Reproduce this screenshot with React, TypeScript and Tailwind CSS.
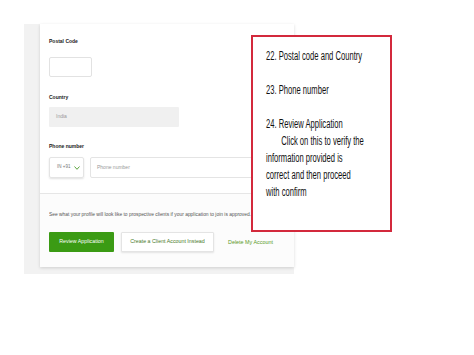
export default function App() {
  const ui = { fontFamily: '"Liberation Sans", Arial, sans-serif' };

  return (
    <div className="relative w-[474px] h-[355px] bg-white overflow-hidden" style={ui}>
      <div className="mt-[24px] ml-[24px] w-[270px] bg-[#f2f2f2] pl-[16px] pb-[7px]">
        <div className="bg-white shadow-[0_1px_3px_rgba(0,0,0,0.15)]">
          <div className="pl-[9px] pr-[9px] pt-[14px] pb-[15px] border-b border-[#e6e6e6]">
            <div className="text-[5px] font-bold text-[#222] leading-[7px]">Postal Code</div>
            <div className="mt-[12px] w-[43px] h-[20px] border border-[#e2e2e2] rounded-[2px]" />

            <div className="mt-[17px] text-[5px] font-bold text-[#222] leading-[7px]">Country</div>
            <div className="mt-[6px] w-[130px] h-[20px] bg-[#f0f0f0] rounded-[1px] flex items-center pl-[7px]">
              <span className="text-[5px] text-[#999]">India</span>
            </div>

            <div className="mt-[16px] text-[5px] font-bold text-[#222] leading-[7px]">Phone number</div>
            <div className="mt-[7px] flex gap-[6px]">
              <div className="w-[35px] h-[21px] border border-[#e4e4e4] shadow-[0_1px_2px_rgba(0,0,0,0.12)] rounded-[2px] flex items-center pl-[7px] pr-[3px]">
                <span className="text-[4.5px] text-[#777] whitespace-nowrap">IN +91</span>
                <svg className="ml-auto" width="6" height="4" viewBox="0 0 6 4">
                  <polyline points="0.5,0.5 3,3.3 5.5,0.5" fill="none" stroke="#4a9a2a" strokeWidth="0.9" />
                </svg>
              </div>
              <div className="flex-1 h-[21px] border border-[#e4e4e4] rounded-[2px] flex items-center pl-[6px]">
                <span className="text-[5px] text-[#999]">Phone number</span>
              </div>
            </div>
          </div>

          <div className="bg-[#fcfcfc] pl-[9px] pt-[18px] pb-[15px]">
            <div className="text-[4.9px] text-[#555] leading-[6px] whitespace-nowrap overflow-hidden">
              See what your profile will look like to prospective clients if your application to join is approved.
            </div>
            <div className="mt-[14px] flex items-center">
              <button className="w-[65px] h-[20px] bg-[#3b9b14] text-white text-[5.3px] rounded-[1px] flex items-center justify-center whitespace-nowrap">
                Review Application
              </button>
              <button className="ml-[7px] w-[93px] h-[20px] bg-white border border-[#e4e4e4] shadow-[0_1px_2px_rgba(0,0,0,0.1)] text-[#4a7a2a] text-[5.3px] rounded-[1px] flex items-center justify-center whitespace-nowrap">
                Create a Client Account Instead
              </button>
              <span className="ml-[14px] text-[5.4px] text-[#5a9a2a] whitespace-nowrap">Delete My Account</span>
            </div>
          </div>
        </div>
      </div>

      {/* annotation box */}
      <div className="absolute left-[251px] top-[35px] w-[141px] h-[197px] bg-white border-2 border-[#d3293c] pl-[13px] pt-[11px] overflow-hidden">
        <div className="origin-top-left scale-x-[0.635] whitespace-nowrap text-[12px] leading-[17px] text-[#111]">
          <p>22. Postal code and Country</p>
          <p className="mt-[17px]">23. Phone number</p>
          <p className="mt-[17px]">24. Review Application</p>
          <p className="pl-[24px]">Click on this to verify the</p>
          <p>information provided is</p>
          <p>correct and then proceed</p>
          <p>with confirm</p>
        </div>
      </div>
    </div>
  );
}
